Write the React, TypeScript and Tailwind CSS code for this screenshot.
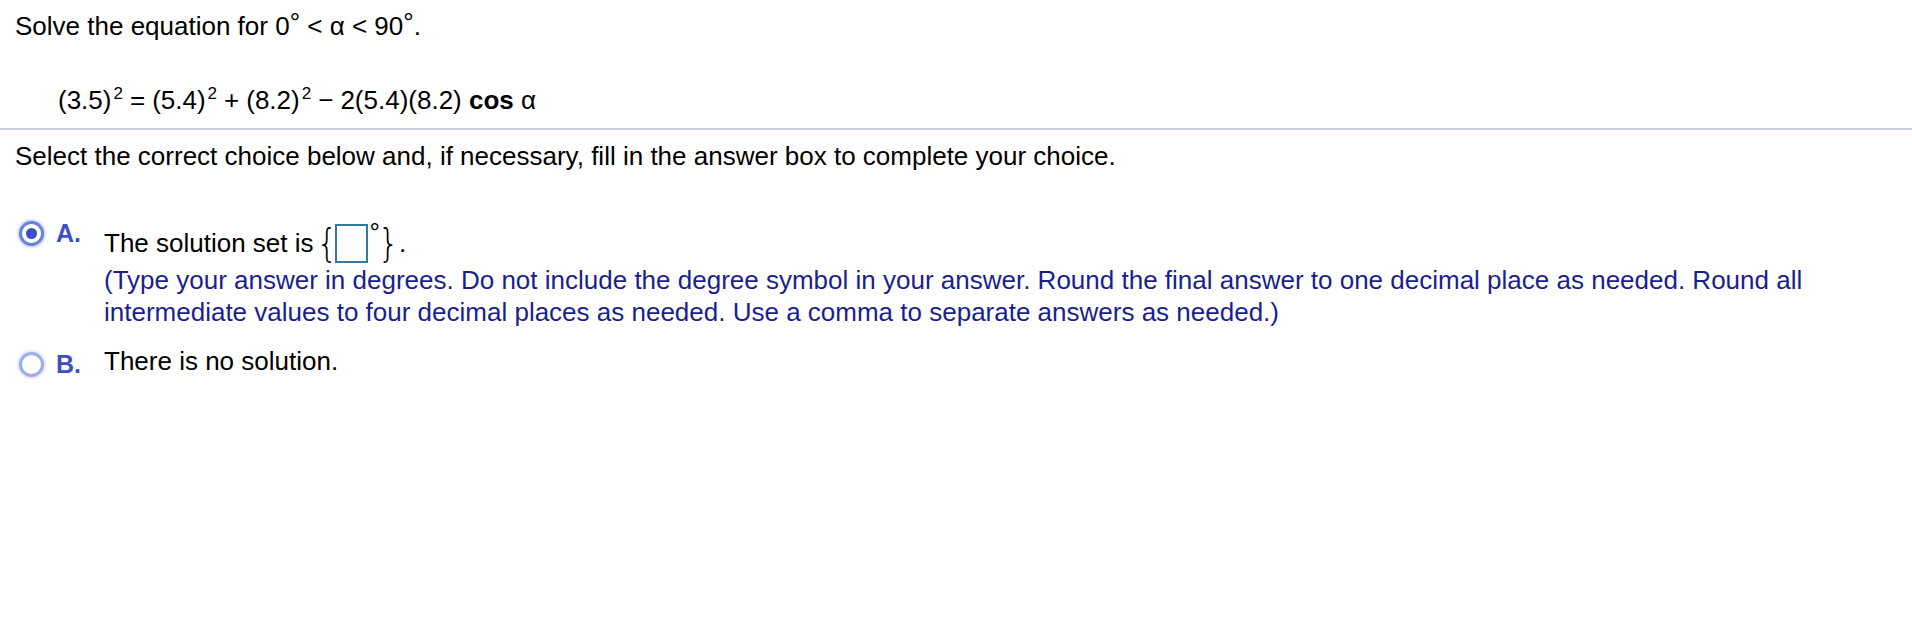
import React from "react";

const Sup: React.FC<{ children: React.ReactNode }> = ({ children }) => (
  <span className="relative -top-[10px] ml-[2px] text-[17px] leading-none">{children}</span>
);

const Op: React.FC<{ children: React.ReactNode }> = ({ children }) => (
  <span className="mx-[7px]">{children}</span>
);

const Radio: React.FC<{ checked?: boolean }> = ({ checked }) => (
  <span
    className={
      "flex items-center justify-center w-[25px] h-[25px] rounded-full border-[3px] bg-white " +
      (checked
        ? "border-[#6c81dd] shadow-[0_0_3px_1px_#b3c0f3]"
        : "border-[#9badec] shadow-[0_0_3px_1px_#cdd6f8]")
    }
  >
    {checked && <span className="w-[11px] h-[11px] rounded-full bg-[#3a4ec6]" />}
  </span>
);

export default function App() {
  return (
    <div className="w-[1912px] h-[624px] bg-white text-black font-['Liberation_Sans',Arial,sans-serif] overflow-hidden">
      {/* question */}
      <div className="pt-[11px] pl-[15px] text-[26px] leading-[30px]">
        Solve the equation for 0<span className="relative -top-[4px]">°</span> &lt; α &lt; 90
        <span className="relative -top-[4px]">°</span>.
      </div>

      <div className="mt-[44px] pl-[58px] text-[26px] leading-[30px] whitespace-nowrap">
        (3.5)<Sup>2</Sup>
        <Op>=</Op>
        (5.4)<Sup>2</Sup>
        <Op>+</Op>
        (8.2)<Sup>2</Sup>
        <Op>−</Op>
        2(5.4)(8.2) <span className="font-bold">cos</span> α
      </div>

      <div className="mt-[13px] h-[2px] bg-[#ccd0dc]" />

      <div className="mt-[11px] pl-[15px] text-[26px] leading-[30px]">
        Select the correct choice below and, if necessary, fill in the answer box to complete your choice.
      </div>

      {/* choices */}
      <div className="mt-[50px] flex flex-col">
        <div className="flex">
          <div className="w-[104px] shrink-0 pl-[19px] flex items-start">
            <div className="flex items-center h-[24px]">
              <Radio checked />
              <span className="ml-[12px] relative top-[1px] text-[25px] font-bold text-[#3d50c3]">A.</span>
            </div>
          </div>
          <div className="flex flex-col">
            <div className="mt-[2px] h-[40px] flex items-center text-[26px] leading-[30px]">
              <span>The solution set is</span>
              <span className="ml-[3px] -mr-[3px] text-[33px] leading-none scale-y-[1.2] font-['DejaVu_Sans',sans-serif] font-extralight">
                {"{"}
              </span>
              <span className="w-[33px] h-[39px] border-2 border-[#3479a0] bg-white" />
              <span className="self-start -mt-[4px] ml-[2px] text-[26px] leading-[26px]">°</span>
              <span className="-ml-[2px] text-[33px] leading-none scale-y-[1.2] font-['DejaVu_Sans',sans-serif] font-extralight">
                {"}"}
              </span>
              <span>.</span>
            </div>
            <div className="mt-[1px] text-[26px] leading-[32px] text-[#1a1f8e]">
              (Type your answer in degrees. Do not include the degree symbol in your answer. Round the final answer to one decimal place as needed. Round all
              <br />
              intermediate values to four decimal places as needed. Use a comma to separate answers as needed.)
            </div>
          </div>
        </div>

        <div className="mt-[18px] flex">
          <div className="w-[104px] shrink-0 pl-[19px] flex items-center">
            <Radio />
            <span className="ml-[12px] text-[25px] font-bold text-[#3d50c3]">B.</span>
          </div>
          <div className="text-[26px] leading-[30px]">There is no solution.</div>
        </div>
      </div>
    </div>
  );
}
